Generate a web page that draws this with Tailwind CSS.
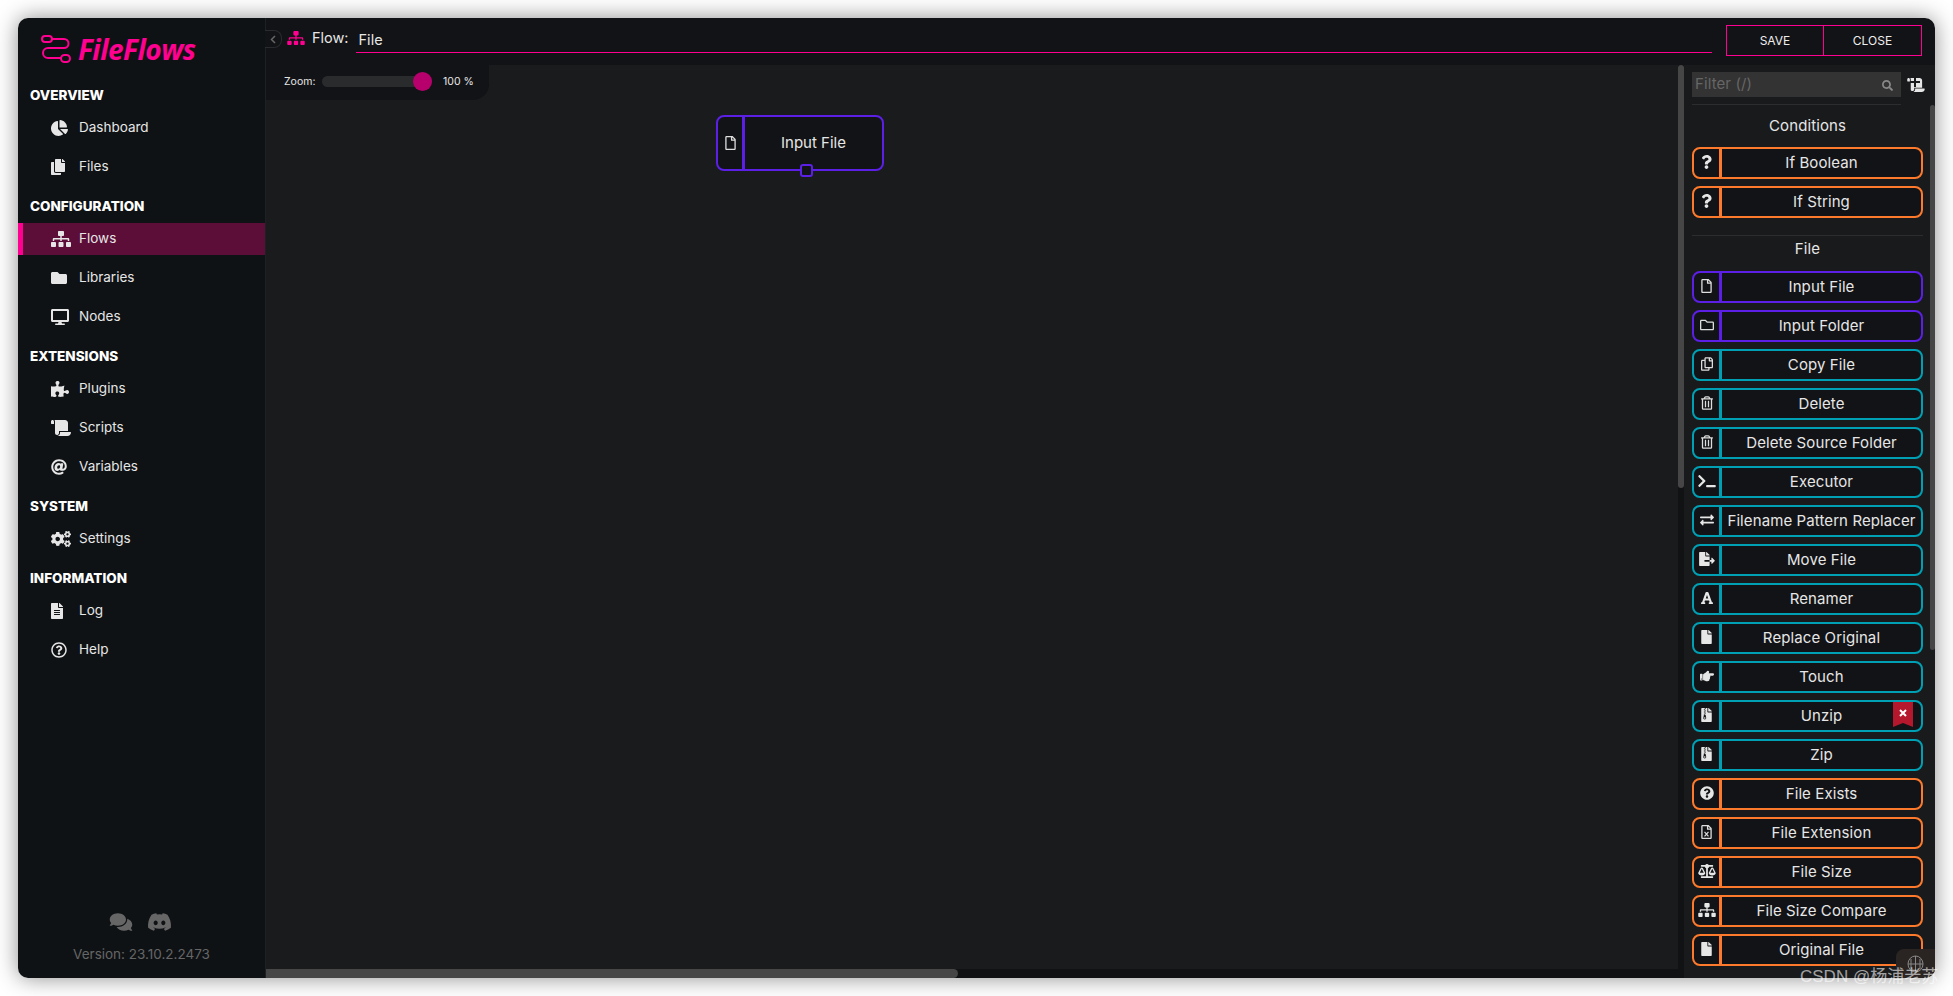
<!DOCTYPE html>
<html lang="en">
<head>
  <meta charset="UTF-8" />
  <title>FileFlows</title>
  <script src="https://cdn.jsdelivr.net/npm/@tailwindcss/browser@4"></script>
</head>
<body class="relative h-[996px] overflow-hidden bg-white pl-[18px] pt-[18px] font-[Inter,sans-serif] text-[#e6e6e6]">
  <!-- icon sprites -->
  <svg class="hidden">
    <symbol id="i-sitemap" viewBox="0 0 640 512"><path fill="currentColor" d="M128 352H32c-17.67 0-32 14.33-32 32v96c0 17.67 14.33 32 32 32h96c17.67 0 32-14.33 32-32v-96c0-17.67-14.33-32-32-32zm-24-80h192v48h48v-48h192v48h48v-57.59c0-21.17-17.23-38.41-38.41-38.41H344v-64h40c17.67 0 32-14.33 32-32V32c0-17.67-14.33-32-32-32H256c-17.67 0-32 14.33-32 32v96c0 17.67 14.33 32 32 32h40v64H94.41C73.23 224 56 241.23 56 262.41V320h48v-48zm264 80h-96c-17.67 0-32 14.33-32 32v96c0 17.67 14.33 32 32 32h96c17.67 0 32-14.33 32-32v-96c0-17.67-14.33-32-32-32zm240 0h-96c-17.67 0-32 14.33-32 32v96c0 17.67 14.33 32 32 32h96c17.67 0 32-14.33 32-32v-96c0-17.67-14.33-32-32-32z"/></symbol>
    <symbol id="i-file" viewBox="0 0 384 512"><path fill="currentColor" d="M224 136V0H24C10.7 0 0 10.7 0 24v464c0 13.3 10.7 24 24 24h336c13.3 0 24-10.7 24-24V160H248c-13.2 0-24-10.8-24-24zm160-14.1v6.1H256V0h6.1c6.4 0 12.5 2.5 17 7l97.9 98c4.5 4.5 7 10.6 7 16.9z"/></symbol>
    <symbol id="i-file-o" viewBox="0 0 384 512"><path fill="currentColor" d="M369.9 97.9L286 14C277 5 264.8-.1 252.1-.1H48C21.5 0 0 21.5 0 48v416c0 26.5 21.5 48 48 48h288c26.5 0 48-21.5 48-48V131.9c0-12.7-5.1-25-14.1-34zM332.1 128H256V51.9l76.1 76.1zM48 464V48h160v104c0 13.3 10.7 24 24 24h104v288H48z"/></symbol>
    <symbol id="i-file-x" viewBox="0 0 384 512"><path fill="currentColor" d="M369.9 97.9L286 14C277 5 264.8-.1 252.1-.1H48C21.5 0 0 21.5 0 48v416c0 26.5 21.5 48 48 48h288c26.5 0 48-21.5 48-48V131.9c0-12.7-5.1-25-14.1-34zM332.1 128H256V51.9l76.1 76.1zM48 464V48h160v104c0 13.3 10.7 24 24 24h104v288H48z"/><path fill="none" stroke="currentColor" stroke-width="44" d="M120 250l144 170M264 250L120 420"/></symbol>
    <symbol id="i-folder" viewBox="0 0 512 512"><path fill="currentColor" d="M464 128H272l-64-64H48C21.49 64 0 85.49 0 112v288c0 26.51 21.49 48 48 48h416c26.51 0 48-21.49 48-48V176c0-26.51-21.49-48-48-48z"/></symbol>
    <symbol id="i-folder-o" viewBox="0 0 512 512"><path fill="currentColor" d="M464 128H272l-54.63-54.63c-6-6-14.14-9.37-22.63-9.37H48C21.49 64 0 85.49 0 112v288c0 26.51 21.49 48 48 48h416c26.51 0 48-21.49 48-48V176c0-26.51-21.49-48-48-48zm0 272H48V112h140.12l54.63 54.63c6 6 14.14 9.37 22.63 9.37H464v224z"/></symbol>
    <symbol id="i-copy-o" viewBox="0 0 448 512"><path fill="currentColor" d="M433.941 65.941l-51.882-51.882A48 48 0 0 0 348.118 0H176c-26.51 0-48 21.49-48 48v48H48c-26.51 0-48 21.49-48 48v320c0 26.51 21.49 48 48 48h224c26.51 0 48-21.49 48-48v-48h80c26.51 0 48-21.49 48-48V99.882a48 48 0 0 0-14.059-33.941zM266 464H54a6 6 0 0 1-6-6V150a6 6 0 0 1 6-6h74v224c0 26.51 21.49 48 48 48h96v42a6 6 0 0 1-6 6zm128-96H182a6 6 0 0 1-6-6V54a6 6 0 0 1 6-6h106v88c0 13.255 10.745 24 24 24h88v202a6 6 0 0 1-6 6zm6-256h-64V48h9.632c1.591 0 3.117.632 4.243 1.757l48.368 48.368a6 6 0 0 1 1.757 4.243V112z"/></symbol>
    <symbol id="i-copy" viewBox="0 0 448 512"><path fill="currentColor" d="M320 448v40c0 13.255-10.745 24-24 24H24c-13.255 0-24-10.745-24-24V120c0-13.255 10.745-24 24-24h72v296c0 30.879 25.121 56 56 56h168zm0-344V0H152c-13.255 0-24 10.745-24 24v368c0 13.255 10.745 24 24 24h272c13.255 0 24-10.745 24-24V128H344c-13.2 0-24-10.8-24-24zm120.971-31.029L375.029 7.029A24 24 0 0 0 358.059 0H352v96h96v-6.059a24 24 0 0 0-7.029-16.97z"/></symbol>
    <symbol id="i-trash" viewBox="0 0 448 512"><path fill="currentColor" d="M268 416h24a12 12 0 0 0 12-12V188a12 12 0 0 0-12-12h-24a12 12 0 0 0-12 12v216a12 12 0 0 0 12 12zM432 80h-82.41l-34-56.7A48 48 0 0 0 274.41 0H173.59a48 48 0 0 0-41.16 23.3L98.41 80H16A16 16 0 0 0 0 96v16a16 16 0 0 0 16 16h16v336a48 48 0 0 0 48 48h288a48 48 0 0 0 48-48V128h16a16 16 0 0 0 16-16V96a16 16 0 0 0-16-16zM171.84 50.91A6 6 0 0 1 177 48h94a6 6 0 0 1 5.15 2.91L293.61 80H154.39zM368 464H80V128h288zm-212-48h24a12 12 0 0 0 12-12V188a12 12 0 0 0-12-12h-24a12 12 0 0 0-12 12v216a12 12 0 0 0 12 12z"/></symbol>
    <symbol id="i-terminal" viewBox="0 0 640 512"><path fill="currentColor" d="M257.981 272.971L63.638 467.314c-9.373 9.373-24.569 9.373-33.941 0L7.029 444.647c-9.357-9.357-9.375-24.522-.04-33.901L161.011 256 6.99 101.255c-9.335-9.379-9.317-24.544.04-33.901l22.667-22.667c9.373-9.373 24.569-9.373 33.941 0L257.981 239.03c9.373 9.372 9.373 24.568 0 33.941zM640 456v-32c0-13.255-10.745-24-24-24H312c-13.255 0-24 10.745-24 24v32c0 13.255 10.745 24 24 24h304c13.255 0 24-10.745 24-24z"/></symbol>
    <symbol id="i-exchange" viewBox="0 0 512 512"><path fill="currentColor" d="M0 168v-16c0-13.255 10.745-24 24-24h360V80c0-21.367 25.899-32.042 40.971-16.971l80 80c9.372 9.373 9.372 24.569 0 33.941l-80 80C409.956 271.982 384 261.456 384 240v-48H24c-13.255 0-24-10.745-24-24zm488 152H128v-48c0-21.314-25.862-32.08-40.971-16.971l-80 80c-9.372 9.373-9.372 24.569 0 33.941l80 80C102.057 463.997 128 453.437 128 432v-48h360c13.255 0 24-10.745 24-24v-16c0-13.255-10.745-24-24-24z"/></symbol>
    <symbol id="i-file-export" viewBox="0 0 576 512"><path fill="currentColor" d="M384 121.9c0-6.3-2.5-12.4-7-16.9L279.1 7c-4.5-4.5-10.6-7-17-7H256v128h128zM571 308l-95.7-96.4c-10.1-10.1-27.4-3-27.4 11.3V288h-64v64h64v65.2c0 14.3 17.3 21.4 27.4 11.3L571 332c6.6-6.6 6.6-17.4 0-24zm-379 28v-32c0-8.8 7.2-16 16-16h176V160H248c-13.2 0-24-10.8-24-24V0H24C10.7 0 0 10.7 0 24v464c0 13.3 10.7 24 24 24h336c13.3 0 24-10.7 24-24V352H208c-8.8 0-16-7.2-16-16z"/></symbol>
    <symbol id="i-font" viewBox="0 0 448 512"><path fill="currentColor" d="M432 416h-23.41L277.88 53.69A32 32 0 0 0 247.58 32h-47.16a32 32 0 0 0-30.3 21.69L39.41 416H16a16 16 0 0 0-16 16v32a16 16 0 0 0 16 16h128a16 16 0 0 0 16-16v-32a16 16 0 0 0-16-16h-19.58l23.3-64h152.56l23.3 64H304a16 16 0 0 0-16 16v32a16 16 0 0 0 16 16h128a16 16 0 0 0 16-16v-32a16 16 0 0 0-16-16zM176.85 272L224 142.51 271.15 272z"/></symbol>
    <symbol id="i-hand" viewBox="0 0 512 512"><path fill="currentColor" d="M512 199.652c0 23.625-20.65 43.826-44.8 43.826h-99.851c16.34 17.048 18.346 49.766-6.299 70.944 14.288 22.829 2.147 53.017-16.45 62.315C353.574 425.878 322.654 448 272 448c-2.746 0-13.276-.203-16-.195-61.971.168-76.894-31.065-123.731-38.315C120.596 407.683 112 397.599 112 385.786V214.261l.002-.001c.011-18.366 10.607-35.889 28.464-43.845 28.886-12.994 95.413-49.038 107.534-77.323 7.797-18.194 21.384-29.084 40-29.092 34.222-.014 57.752 35.098 44.119 66.908-3.583 8.359-8.312 16.67-14.128 24.918H467.2c23.45 0 44.8 20.543 44.8 43.826zM96 200v192c0 13.255-10.745 24-24 24H24c-13.255 0-24-10.745-24-24V200c0-13.255 10.745-24 24-24h48c13.255 0 24 10.745 24 24zM68 368c0-11.046-8.954-20-20-20s-20 8.954-20 20 8.954 20 20 20 20-8.954 20-20z"/></symbol>
    <symbol id="i-zip" viewBox="0 0 384 512"><path fill="currentColor" d="M377 105L279.1 7c-4.5-4.5-10.6-7-17-7H256v128h128v-6.1c0-6.3-2.5-12.4-7-16.9zM128.4 336c-17.9 0-32.4 12.1-32.4 27 0 15 14.6 27 32.5 27s32.4-12.1 32.4-27-14.6-27-32.5-27zM224 136V0h-63.6v32h-32V0H24C10.7 0 0 10.7 0 24v464c0 13.3 10.7 24 24 24h336c13.3 0 24-10.7 24-24V160H248c-13.2 0-24-10.8-24-24zM95.9 32h32v32h-32zm32.3 384c-33.2 0-58-30.4-51.4-62.9L96.4 256v-32h32v-32h-32v-32h32v-32h-32V96h32V64h32v32h-32v32h32v32h-32v32h32v32h-32v32h22.1c5.7 0 10.7 4.1 11.8 9.7l17.3 87.7c6.4 32.4-18.4 62.6-51.4 62.6z"/></symbol>
    <symbol id="i-q-circle" viewBox="0 0 512 512"><path fill="currentColor" d="M504 256c0 136.997-111.043 248-248 248S8 392.997 8 256C8 119.083 119.043 8 256 8s248 111.083 248 248zM262.655 90c-54.497 0-89.255 22.957-116.549 63.758-3.536 5.286-2.353 12.415 2.715 16.258l34.699 26.31c5.205 3.947 12.621 3.008 16.665-2.122 17.864-22.658 30.113-35.797 57.303-35.797 20.429 0 45.698 13.148 45.698 32.958 0 14.976-12.363 22.667-32.534 33.976C247.128 238.528 216 254.941 216 296v4c0 6.627 5.373 12 12 12h56c6.627 0 12-5.373 12-12v-1.333c0-28.462 83.186-29.647 83.186-106.667 0-58.002-60.165-102-116.531-102zM256 338c-25.365 0-46 20.635-46 46 0 25.364 20.635 46 46 46s46-20.636 46-46c0-25.365-20.635-46-46-46z"/></symbol>
    <symbol id="i-q-circle-o" viewBox="0 0 512 512"><path fill="currentColor" d="M256 8C119.043 8 8 119.083 8 256c0 136.997 111.043 248 248 248s248-111.003 248-248C504 119.083 392.957 8 256 8zm0 448c-110.532 0-200-89.431-200-200 0-110.495 89.472-200 200-200 110.491 0 200 89.471 200 200 0 110.53-89.431 200-200 200zm107.244-255.2c0 67.052-72.421 68.084-72.421 92.863V300c0 6.627-5.373 12-12 12h-45.647c-6.627 0-12-5.373-12-12v-8.659c0-35.745 27.1-50.034 47.579-61.516 17.561-9.845 28.324-16.541 28.324-29.579 0-17.246-21.999-28.693-39.784-28.693-23.189 0-33.894 10.977-48.942 29.969-4.057 5.12-11.46 6.071-16.666 2.124l-27.824-21.098c-5.107-3.872-6.251-11.066-2.644-16.363C184.846 131.491 214.94 112 261.794 112c49.071 0 101.45 38.304 101.45 88.8zM298 368c0 23.159-18.841 42-42 42s-42-18.841-42-42 18.841-42 42-42 42 18.841 42 42z"/></symbol>
    <symbol id="i-question" viewBox="0 0 384 512"><path fill="currentColor" d="M202.021 0C122.202 0 70.503 32.703 29.914 91.026c-7.363 10.58-5.093 25.086 5.178 32.874l43.138 32.709c10.373 7.865 25.132 6.026 33.253-4.148 25.049-31.381 43.63-49.449 82.757-49.449 30.764 0 68.816 19.799 68.816 49.631 0 22.552-18.617 34.134-48.993 51.164-35.423 19.86-82.299 44.576-82.299 106.405V320c0 13.255 10.745 24 24 24h72.471c13.255 0 24-10.745 24-24v-5.773c0-42.86 125.268-44.645 125.268-160.627C377.504 66.256 286.902 0 202.021 0zM192 373.459c-38.196 0-69.271 31.075-69.271 69.271 0 38.195 31.075 69.27 69.271 69.27s69.271-31.075 69.271-69.271-31.075-69.27-69.271-69.27z"/></symbol>
    <symbol id="i-pie" viewBox="0 0 544 512"><path fill="currentColor" d="M527.79 288H290.5l158.03 158.03c6.04 6.04 15.98 6.53 22.19.68 38.7-36.46 65.32-85.61 73.13-140.86 1.34-9.46-6.51-17.85-16.06-17.85zm-15.83-64.8C503.72 103.74 408.26 8.28 288.8.04 279.68-.59 272 7.1 272 16.24V240h223.77c9.14 0 16.82-7.68 16.19-16.8zM224 288V50.71c0-9.55-8.39-17.4-17.84-16.06C86.99 51.49-4.1 155.6.14 280.37 4.5 408.51 114.83 513.59 243.03 511.98c50.4-.63 96.97-16.87 135.26-44.03 7.9-5.6 8.42-17.23 1.57-24.08L224 288z"/></symbol>
    <symbol id="i-desktop" viewBox="0 0 576 512"><path fill="currentColor" d="M528 0H48C21.5 0 0 21.5 0 48v320c0 26.5 21.5 48 48 48h192l-16 48h-72c-13.3 0-24 10.7-24 24s10.7 24 24 24h272c13.3 0 24-10.7 24-24s-10.7-24-24-24h-72l-16-48h192c26.5 0 48-21.5 48-48V48c0-26.5-21.5-48-48-48zm-16 352H64V64h448v288z"/></symbol>
    <symbol id="i-puzzle" viewBox="0 0 576 512"><path fill="currentColor" d="M519.442 288.651c-41.519 0-59.5 31.593-82.058 31.593C377.409 320.244 432 144 432 144s-196.288 80-196.288-3.297c0-35.827 36.288-46.25 36.288-85.985C272 19.216 243.885 0 210.539 0c-34.654 0-66.366 18.891-66.366 56.346 0 41.364 31.711 59.277 31.711 81.75C175.885 207.719 0 166.758 0 166.758v333.237s178.635 41.047 178.635-28.662c0-22.473-40-40.107-40-81.471 0-37.456 29.25-56.346 63.577-56.346 33.673 0 61.788 19.216 61.788 54.717 0 39.735-36.288 50.158-36.288 85.985 0 60.803 129.675 25.73 181.23 25.73 0 0-34.725-120.101 25.827-120.101 35.962 0 46.222 36.152 86.13 36.152C556.025 416.1 576 388.2 576 354.7c0-33.4-19.5-66-56.558-66z"/></symbol>
    <symbol id="i-scroll" viewBox="0 0 640 512"><path fill="currentColor" d="M48 0C21.53 0 0 21.53 0 48v64c0 8.84 7.16 16 16 16h80V48C96 21.53 74.47 0 48 0zm208 412.57V352h288V96c0-52.94-43.06-96-96-96H111.59C121.74 13.41 128 29.92 128 48v368c0 38.87 34.65 69.65 74.75 63.12C234.22 474 256 444.46 256 412.57zM288 384v32c0 52.93-43.06 96-96 96h336c61.86 0 112-50.14 112-112 0-8.84-7.16-16-16-16H288z"/></symbol>
    <symbol id="i-at" viewBox="0 0 512 512"><path fill="currentColor" d="M256 8C118.941 8 8 118.919 8 256c0 137.059 110.919 248 248 248 48.154 0 95.342-14.14 135.408-40.223 12.005-7.815 14.625-24.288 5.552-35.372l-10.177-12.433c-7.671-9.371-21.179-11.667-31.373-5.129C325.92 429.757 291.314 440 256 440c-101.458 0-184-82.542-184-184S154.542 72 256 72c100.139 0 184 57.619 184 160 0 38.786-21.093 79.742-58.17 83.693-17.349-.454-16.91-12.857-13.476-30.024l23.433-121.11C394.653 149.75 383.308 136 368.225 136h-44.981a13.518 13.518 0 0 0-13.432 11.993l-.01.092c-14.697-17.901-40.448-21.775-59.971-21.775-74.58 0-137.831 62.234-137.831 151.46 0 65.303 36.785 105.87 96 105.87 26.984 0 57.369-15.637 74.991-38.333 9.522 34.104 40.613 34.103 70.71 34.103C462.609 379.41 504 307.798 504 232 504 95.653 394.023 8 256 8zm-21.68 304.43c-22.249 0-36.07-15.623-36.07-40.771 0-44.993 30.779-72.729 58.63-72.729 22.292 0 35.601 15.241 35.601 40.77 0 45.061-33.875 72.73-58.161 72.73z"/></symbol>
    <symbol id="i-cogs" viewBox="0 0 640 512"><path fill="currentColor" d="M512.1 191l-8.2 14.3c-3 5.3-9.4 7.5-15.1 5.4-11.8-4.4-22.6-10.7-32.1-18.6-4.6-3.8-5.8-10.5-2.8-15.7l8.2-14.3c-6.9-8-12.3-17.3-15.9-27.4h-16.5c-6 0-11.2-4.3-12.2-10.3-2-12-2.1-24.6 0-37.1 1-6 6.2-10.4 12.2-10.4h16.5c3.6-10.1 9-19.4 15.9-27.4l-8.2-14.3c-3-5.2-1.9-11.9 2.8-15.7 9.5-7.9 20.4-14.2 32.1-18.6 5.7-2.1 12.1.1 15.1 5.4l8.2 14.3c10.5-1.9 21.2-1.9 31.7 0L552 6.3c3-5.3 9.4-7.5 15.1-5.4 11.8 4.4 22.6 10.7 32.1 18.6 4.6 3.8 5.8 10.5 2.8 15.7l-8.2 14.3c6.9 8 12.3 17.3 15.9 27.4h16.5c6 0 11.2 4.3 12.2 10.3 2 12 2.1 24.6 0 37.1-1 6-6.2 10.4-12.2 10.4h-16.5c-3.6 10.1-9 19.4-15.9 27.4l8.2 14.3c3 5.2 1.9 11.9-2.8 15.7-9.5 7.9-20.4 14.2-32.1 18.6-5.7 2.1-12.1-.1-15.1-5.4l-8.2-14.3c-10.4 1.9-21.2 1.9-31.7 0zm-10.5-58.8c38.5 29.6 82.4-14.3 52.8-52.8-38.5-29.7-82.4 14.3-52.8 52.8zM386.3 286.1l33.7 16.8c10.1 5.8 14.5 18.1 10.5 29.1-8.9 24.2-26.4 46.4-42.6 65.8-7.4 8.9-20.2 11.1-30.3 5.3l-29.1-16.8c-16 13.7-34.6 24.6-54.9 31.7v33.6c0 11.6-8.3 21.6-19.7 23.6-24.6 4.2-50.4 4.4-75.9 0-11.5-2-20-11.9-20-23.6V418c-20.3-7.2-38.9-18-54.9-31.7L74 403c-10 5.8-22.9 3.6-30.3-5.3-16.2-19.4-33.3-41.6-42.2-65.7-4-10.9.4-23.2 10.5-29.1l33.3-16.8c-3.9-20.9-3.9-42.4 0-63.4L12 205.8c-10.1-5.8-14.6-18.1-10.5-29 8.9-24.2 26-46.4 42.2-65.8 7.4-8.9 20.2-11.1 30.3-5.3l29.1 16.8c16-13.7 34.6-24.6 54.9-31.7V57.1c0-11.5 8.2-21.5 19.6-23.5 24.6-4.2 50.5-4.4 76-.1 11.5 2 20 11.9 20 23.6v33.6c20.3 7.2 38.9 18 54.9 31.7l29.1-16.8c10-5.8 22.9-3.6 30.3 5.3 16.2 19.4 33.2 41.6 42.1 65.8 4 10.9.1 23.2-10 29.1l-33.7 16.8c3.9 21 3.9 42.5 0 63.5zm-117.6 21.1c59.2-77-28.7-164.9-105.7-105.7-59.2 77 28.7 164.9 105.7 105.7zm243.4 182.7l-8.2 14.3c-3 5.3-9.4 7.5-15.1 5.4-11.8-4.4-22.6-10.7-32.1-18.6-4.6-3.8-5.8-10.5-2.8-15.7l8.2-14.3c-6.9-8-12.3-17.3-15.9-27.4h-16.5c-6 0-11.2-4.3-12.2-10.3-2-12-2.1-24.6 0-37.1 1-6 6.2-10.4 12.2-10.4h16.5c3.6-10.1 9-19.4 15.9-27.4l-8.2-14.3c-3-5.2-1.9-11.9 2.8-15.7 9.5-7.9 20.4-14.2 32.1-18.6 5.7-2.1 12.1.1 15.1 5.4l8.2 14.3c10.5-1.9 21.2-1.9 31.7 0l8.2-14.3c3-5.3 9.4-7.5 15.1-5.4 11.8 4.4 22.6 10.7 32.1 18.6 4.6 3.8 5.8 10.5 2.8 15.7l-8.2 14.3c6.9 8 12.3 17.3 15.9 27.4h16.5c6 0 11.2 4.3 12.2 10.3 2 12 2.1 24.6 0 37.1-1 6-6.2 10.4-12.2 10.4h-16.5c-3.6 10.1-9 19.4-15.9 27.4l8.2 14.3c3 5.2 1.9 11.9-2.8 15.7-9.5 7.9-20.4 14.2-32.1 18.6-5.7 2.1-12.1-.1-15.1-5.4l-8.2-14.3c-10.4 1.9-21.2 1.9-31.7 0zM501.6 431c38.5 29.6 82.4-14.3 52.8-52.8-38.5-29.6-82.4 14.3-52.8 52.8z"/></symbol>
    <symbol id="i-file-alt" viewBox="0 0 384 512"><path fill="currentColor" d="M224 136V0H24C10.7 0 0 10.7 0 24v464c0 13.3 10.7 24 24 24h336c13.3 0 24-10.7 24-24V160H248c-13.2 0-24-10.8-24-24zm64 236c0 6.6-5.4 12-12 12H108c-6.6 0-12-5.4-12-12v-8c0-6.6 5.4-12 12-12h168c6.6 0 12 5.4 12 12v8zm0-64c0 6.6-5.4 12-12 12H108c-6.6 0-12-5.4-12-12v-8c0-6.6 5.4-12 12-12h168c6.6 0 12 5.4 12 12v8zm0-72v8c0 6.6-5.4 12-12 12H108c-6.6 0-12-5.4-12-12v-8c0-6.6 5.4-12 12-12h168c6.6 0 12 5.4 12 12zm96-114.1v6.1H256V0h6.1c6.4 0 12.5 2.5 17 7l97.9 98c4.5 4.5 7 10.6 7 16.9z"/></symbol>
    <symbol id="i-comments" viewBox="0 0 576 512"><path fill="currentColor" d="M416 192c0-88.4-93.1-160-208-160S0 103.6 0 192c0 34.3 14.1 65.9 38 92-13.4 30.2-35.5 54.2-35.8 54.5-2.2 2.3-2.8 5.7-1.5 8.7S4.8 352 8 352c36.6 0 66.9-12.3 88.7-25 32.2 15.7 70.3 25 111.3 25 114.9 0 208-71.6 208-160zm122 220c23.9-26 38-57.7 38-92 0-66.9-53.5-124.2-129.3-148.1.9 6.6 1.3 13.3 1.3 20.1 0 105.9-107.7 192-240 192-10.8 0-21.3-.8-31.7-1.9C207.8 439.6 281.8 480 368 480c41 0 79.1-9.2 111.3-25 21.8 12.7 52.1 25 88.7 25 3.2 0 6.1-1.9 7.3-4.8 1.3-2.9.7-6.3-1.5-8.7-.3-.3-22.4-24.2-35.8-54.5z"/></symbol>
    <symbol id="i-discord" viewBox="0 0 640 512"><path fill="currentColor" d="M524.531,69.836a1.5,1.5,0,0,0-.764-.7A485.065,485.065,0,0,0,404.081,32.03a1.816,1.816,0,0,0-1.923.91,337.461,337.461,0,0,0-14.9,30.6,447.848,447.848,0,0,0-134.426,0,309.541,309.541,0,0,0-15.135-30.6,1.89,1.89,0,0,0-1.924-.91A483.689,483.689,0,0,0,116.085,69.137a1.712,1.712,0,0,0-.788.676C39.068,183.651,18.186,294.69,28.43,404.354a2.016,2.016,0,0,0,.765,1.375A487.666,487.666,0,0,0,176.02,479.918a1.9,1.9,0,0,0,2.063-.676A348.2,348.2,0,0,0,208.12,430.4a1.86,1.86,0,0,0-1.019-2.588,321.173,321.173,0,0,1-45.868-21.853,1.885,1.885,0,0,1-.185-3.126c3.082-2.309,6.166-4.711,9.109-7.137a1.819,1.819,0,0,1,1.9-.256c96.229,43.917,200.41,43.917,295.5,0a1.812,1.812,0,0,1,1.924.233c2.944,2.426,6.027,4.851,9.132,7.16a1.884,1.884,0,0,1-.162,3.126,301.407,301.407,0,0,1-45.89,21.83,1.875,1.875,0,0,0-1,2.611,391.055,391.055,0,0,0,30.014,48.815,1.864,1.864,0,0,0,2.063.7A486.048,486.048,0,0,0,610.7,405.729a1.882,1.882,0,0,0,.765-1.352C623.729,277.594,590.933,167.465,524.531,69.836ZM222.491,337.58c-28.972,0-52.844-26.587-52.844-59.239S193.056,219.1,222.491,219.1c29.665,0,53.306,26.82,52.843,59.239C275.334,310.993,251.924,337.58,222.491,337.58Zm195.38,0c-28.971,0-52.843-26.587-52.843-59.239S388.437,219.1,417.871,219.1c29.667,0,53.307,26.820,52.844,59.239C470.715,310.993,447.538,337.58,417.871,337.58Z"/></symbol>
    <symbol id="i-scale" viewBox="0 0 640 512"><path fill="currentColor" d="M256 336h-.02c0-16.18 1.34-8.73-85.05-181.51-17.65-35.29-68.19-35.36-85.87 0C-2.06 328.75.02 320.33.02 336H0c0 44.18 57.31 80 128 80s128-35.82 128-80zM128 176l72 144H56l72-144zm511.98 160c0-16.18 1.34-8.73-85.05-181.51-17.65-35.29-68.19-35.36-85.87 0-87.12 174.26-85.04 165.84-85.04 181.51H384c0 44.18 57.31 80 128 80s128-35.82 128-80h-.02zM440 320l72-144 72 144H440zm88 128H352V153.25c23.51-10.29 41.16-31.48 46.39-57.25H528c8.84 0 16-7.16 16-16V48c0-8.84-7.16-16-16-16H383.64C369.04 12.68 346.09 0 320 0s-49.04 12.68-63.64 32H112c-8.84 0-16 7.16-16 16v32c0 8.84 7.16 16 16 16h129.61c5.23 25.76 22.87 46.96 46.39 57.25V448H112c-8.84 0-16 7.16-16 16v32c0 8.84 7.16 16 16 16h416c8.84 0 16-7.16 16-16v-32c0-8.84-7.16-16-16-16z"/></symbol>
    <symbol id="i-search" viewBox="0 0 512 512"><path fill="currentColor" d="M505 442.7L405.3 343c-4.5-4.5-10.6-7-17-7H372c27.6-35.3 44-79.7 44-128C416 93.1 322.9 0 208 0S0 93.1 0 208s93.1 208 208 208c48.3 0 92.7-16.4 128-44v16.3c0 6.4 2.5 12.5 7 17l99.7 99.7c9.4 9.4 24.6 9.4 33.9 0l28.3-28.3c9.4-9.4 9.4-24.6.1-34zM208 336c-70.7 0-128-57.2-128-128 0-70.7 57.2-128 128-128 70.7 0 128 57.2 128 128 0 70.7-57.2 128-128 128z"/></symbol>
  </svg>

  <div class="flex h-[960px] w-[1917px] overflow-hidden rounded-[10px] shadow-[0_0_22px_rgba(0,0,0,0.45)]">
    <!-- sidebar -->
    <aside class="flex h-full w-[247px] shrink-0 flex-col bg-[#0f1215] text-[13.5px]">
      <div class="flex h-[57px] items-center pl-[23px] pt-[5px]">
        <svg class="mr-[7px] h-[28px] w-[30px] text-[#ff0090]" viewBox="0 0 30 28" fill="none" stroke="currentColor" stroke-width="2">
          <rect x="1" y="1" width="10" height="6" rx="3" />
          <path d="M11 4h12a4.500 4.500 0 0 1 0 9H7a5 5 0 0 0 0 10h13" />
          <rect x="20" y="20" width="9" height="7" rx="3.500" />
        </svg>
        <span class="font-['Open_Sans',sans-serif] text-[28px] font-bold italic leading-none tracking-[-0.5px] text-[#ff0090]">FileFlows</span>
      </div>

      <h3 class="mb-[1px] mt-[8px] flex h-6 items-center pl-3 text-[13.5px] font-extrabold text-white">OVERVIEW</h3>
      <a class="my-[3.5px] flex h-8 items-center pl-[33px]"><span class="w-[28px]"><svg class="block h-4 w-[17px]"><use href="#i-pie" /></svg></span>Dashboard</a>
      <a class="my-[3.5px] flex h-8 items-center pl-[33px]"><span class="w-[28px]"><svg class="block h-4 w-[14px]"><use href="#i-copy" /></svg></span>Files</a>

      <h3 class="mb-[1px] mt-[8px] flex h-6 items-center pl-3 text-[13.5px] font-extrabold text-white">CONFIGURATION</h3>
      <a class="my-[3.5px] flex h-8 items-center border-l-[5px] border-[#ff0090] bg-[#5c0d38] pl-[28px]"><span class="w-[28px]"><svg class="block h-4 w-5"><use href="#i-sitemap" /></svg></span>Flows</a>
      <a class="my-[3.5px] flex h-8 items-center pl-[33px]"><span class="w-[28px]"><svg class="block h-4 w-4"><use href="#i-folder" /></svg></span>Libraries</a>
      <a class="my-[3.5px] flex h-8 items-center pl-[33px]"><span class="w-[28px]"><svg class="block h-4 w-[18px]"><use href="#i-desktop" /></svg></span>Nodes</a>

      <h3 class="mb-[1px] mt-[8px] flex h-6 items-center pl-3 text-[13.5px] font-extrabold text-white">EXTENSIONS</h3>
      <a class="my-[3.5px] flex h-8 items-center pl-[33px]"><span class="w-[28px]"><svg class="block h-4 w-[18px]"><use href="#i-puzzle" /></svg></span>Plugins</a>
      <a class="my-[3.5px] flex h-8 items-center pl-[33px]"><span class="w-[28px]"><svg class="block h-4 w-5"><use href="#i-scroll" /></svg></span>Scripts</a>
      <a class="my-[3.5px] flex h-8 items-center pl-[33px]"><span class="w-[28px]"><svg class="block h-4 w-4"><use href="#i-at" /></svg></span>Variables</a>

      <h3 class="mb-[1px] mt-[8px] flex h-6 items-center pl-3 text-[13.5px] font-extrabold text-white">SYSTEM</h3>
      <a class="my-[3.5px] flex h-8 items-center pl-[33px]"><span class="w-[28px]"><svg class="block h-4 w-5"><use href="#i-cogs" /></svg></span>Settings</a>

      <h3 class="mb-[1px] mt-[8px] flex h-6 items-center pl-3 text-[13.5px] font-extrabold text-white">INFORMATION</h3>
      <a class="my-[3.5px] flex h-8 items-center pl-[33px]"><span class="w-[28px]"><svg class="block h-4 w-3"><use href="#i-file-alt" /></svg></span>Log</a>
      <a class="my-[3.5px] flex h-8 items-center pl-[33px]"><span class="w-[28px]"><svg class="block h-4 w-4"><use href="#i-q-circle-o" /></svg></span>Help</a>

      <div class="mt-auto flex flex-col items-center pb-[14px] text-[#666]">
        <div class="flex items-center gap-[14px] pr-[2px]">
          <svg class="h-[20px] w-[24px]"><use href="#i-comments" /></svg>
          <svg class="h-[20px] w-[25px]"><use href="#i-discord" /></svg>
        </div>
        <span class="mt-[12px] text-[13.5px] leading-[20px]">Version: 23.10.2.2473</span>
      </div>
    </aside>

    <!-- main -->
    <main class="relative flex h-full flex-1 flex-col border-l border-[#1e2023]">
      <div class="absolute -left-px top-[12px] flex h-[18px] w-[17px] items-center justify-center rounded-r-lg border border-l-0 border-[#2a2b2e] bg-[#121316] text-[#666]">
        <svg class="h-[9px] w-[6px]" viewBox="0 0 6 9" fill="none" stroke="currentColor" stroke-width="1.500"><path d="M5 1L1.500 4.500 5 8" /></svg>
      </div>

      <header class="flex h-[47px] shrink-0 items-start bg-[#121316] pl-[21px] pr-[13px] pt-[7px]">
        <div class="flex h-[26px] items-center text-[14.5px]">
          <svg class="mr-[7px] h-[14px] w-[18px] text-[#ff0090]"><use href="#i-sitemap" /></svg>
          <span>Flow:</span>
        </div>
        <input value="File" class="ml-[7px] h-[28px] flex-1 border-b border-[#ff0090] bg-transparent px-[3px] pt-[2px] text-[14.5px] text-[#e6e6e6] outline-none" />
        <div class="ml-[14px] flex h-[31px] border-[1.5px] border-[#ff0090] text-[12px] text-[#eee]">
          <button class="w-[97px] border-r-[1.5px] border-[#ff0090]">SAVE</button>
          <button class="w-[97px]">CLOSE</button>
        </div>
      </header>

      <div class="flex min-h-0 flex-1">
        <!-- canvas -->
        <div class="flex min-w-0 flex-1 flex-col">
          <div class="relative flex-1 bg-[#1a1b1d]">
            <div class="flex h-[35px] w-[223px] items-center rounded-br-2xl bg-[#121316] pb-[2px] pl-[18px] text-[10.5px]">
              <span class="w-[38px]">Zoom:</span>
              <div class="relative h-[11px] w-[110px] rounded-full bg-[#292b2c]">
                <div class="absolute -top-1 right-0 h-[19px] w-[19px] rounded-full bg-[#b8006c]"></div>
              </div>
              <span class="ml-[11px]">100 %</span>
            </div>
            <!-- node on the canvas -->
            <div class="absolute left-[450px] top-[50px] flex h-[56px] w-[168px] rounded-lg border-[2.5px] border-[#5b1fe6] bg-[#121316]">
              <span class="flex w-[27px] items-center justify-center border-r-[3px] border-[#5b1fe6]"><svg class="h-[14px] w-[11px] text-[#ddd]"><use href="#i-file-o" /></svg></span>
              <span class="flex flex-1 items-center justify-center text-[15px]">Input File</span>
              <span class="absolute bottom-[-8px] left-[82px] h-[13px] w-[13px] rounded-[3px] border-2 border-[#5b1fe6] bg-[#121316]"></span>
            </div>
          </div>
          <div class="h-[9px] shrink-0 bg-[#111214]"><div class="h-full w-[692px] rounded-r-full bg-[#464646]"></div></div>
        </div>

        <div class="w-[6px] shrink-0 bg-[#111214]"><div class="h-[423px] rounded-full bg-[#464646]"></div></div>

        <!-- flow elements -->
        <div class="relative w-[251px] shrink-0 overflow-hidden bg-[#191a1c] pl-2 text-[15px] tracking-[0.1px]">
          <div class="absolute right-0 top-[40px] h-[545px] w-[5px] rounded-full bg-[#464646]"></div>
          <div class="mt-[7px] flex items-center">
            <div class="relative flex h-[25px] w-[209px] items-center bg-[#333] pl-[3px] text-[#666]">
              Filter (/)
              <svg class="absolute right-[8px] top-[8px] h-[11px] w-[11px] text-[#888]"><use href="#i-search" /></svg>
            </div>
            <span class="relative ml-[6px]">
              <svg class="block h-[14px] w-[18px]"><use href="#i-scroll" /></svg>
              <svg class="absolute left-[3px] top-[-1px] h-[10px] w-[10px] text-[#191a1c]" viewBox="0 0 10 10" fill="none" stroke="currentColor" stroke-width="2"><path d="M5 0v10M0 5h10" /></svg>
            </span>
          </div>
          <div class="mt-[7px] h-px w-[209px] bg-[#2c2d30]"></div>
          <div class="flex h-[42px] w-[231px] items-center justify-center">Conditions</div>

          <div class="mb-[7px] flex h-8 w-[231px] rounded-lg border-2 border-[#fd7a2c] bg-[#121316]"><span class="flex w-[28px] items-center justify-center border-r-[3px] border-[#fd7a2c] pb-[3px]"><svg class="h-[14px] w-[11px]"><use href="#i-question" /></svg></span><span class="flex-1 text-center leading-[27px]">If Boolean</span></div>
          <div class="mb-[7px] flex h-8 w-[231px] rounded-lg border-2 border-[#fd7a2c] bg-[#121316]"><span class="flex w-[28px] items-center justify-center border-r-[3px] border-[#fd7a2c] pb-[3px]"><svg class="h-[14px] w-[11px]"><use href="#i-question" /></svg></span><span class="flex-1 text-center leading-[27px]">If String</span></div>

          <div class="mt-[17px] h-px w-[231px] bg-[#2c2d30]"></div>
          <div class="mb-[9px] flex h-[26px] w-[231px] items-center justify-center">File</div>

          <div class="mb-[7px] flex h-8 w-[231px] rounded-lg border-2 border-[#5b1fe6] bg-[#121316]"><span class="flex w-[28px] items-center justify-center border-r-[3px] border-[#5b1fe6] pb-[3px]"><svg class="h-[14px] w-[11px] text-[#ddd]"><use href="#i-file-o" /></svg></span><span class="flex-1 text-center leading-[27px]">Input File</span></div>
          <div class="mb-[7px] flex h-8 w-[231px] rounded-lg border-2 border-[#5b1fe6] bg-[#121316]"><span class="flex w-[28px] items-center justify-center border-r-[3px] border-[#5b1fe6] pb-[3px]"><svg class="h-[14px] w-[14px] text-[#ddd]"><use href="#i-folder-o" /></svg></span><span class="flex-1 text-center leading-[27px]">Input Folder</span></div>

          <div class="mb-[7px] flex h-8 w-[231px] rounded-lg border-2 border-[#00a0b4] bg-[#121316]"><span class="flex w-[28px] items-center justify-center border-r-[3px] border-[#00a0b4] pb-[3px]"><svg class="h-[14px] w-[12px] text-[#ddd]"><use href="#i-copy-o" /></svg></span><span class="flex-1 text-center leading-[27px]">Copy File</span></div>
          <div class="mb-[7px] flex h-8 w-[231px] rounded-lg border-2 border-[#00a0b4] bg-[#121316]"><span class="flex w-[28px] items-center justify-center border-r-[3px] border-[#00a0b4] pb-[3px]"><svg class="h-[14px] w-[12px] text-[#ddd]"><use href="#i-trash" /></svg></span><span class="flex-1 text-center leading-[27px]">Delete</span></div>
          <div class="mb-[7px] flex h-8 w-[231px] rounded-lg border-2 border-[#00a0b4] bg-[#121316]"><span class="flex w-[28px] items-center justify-center border-r-[3px] border-[#00a0b4] pb-[3px]"><svg class="h-[14px] w-[12px] text-[#ddd]"><use href="#i-trash" /></svg></span><span class="flex-1 text-center leading-[27px]">Delete Source Folder</span></div>
          <div class="mb-[7px] flex h-8 w-[231px] rounded-lg border-2 border-[#00a0b4] bg-[#121316]"><span class="flex w-[28px] items-center justify-center border-r-[3px] border-[#00a0b4] pb-[3px]"><svg class="h-[14px] w-[18px]"><use href="#i-terminal" /></svg></span><span class="flex-1 text-center leading-[27px]">Executor</span></div>
          <div class="mb-[7px] flex h-8 w-[231px] rounded-lg border-2 border-[#00a0b4] bg-[#121316]"><span class="flex w-[28px] items-center justify-center border-r-[3px] border-[#00a0b4] pb-[3px]"><svg class="h-[14px] w-[14px]"><use href="#i-exchange" /></svg></span><span class="flex-1 text-center leading-[27px]">Filename Pattern Replacer</span></div>
          <div class="mb-[7px] flex h-8 w-[231px] rounded-lg border-2 border-[#00a0b4] bg-[#121316]"><span class="flex w-[28px] items-center justify-center border-r-[3px] border-[#00a0b4] pb-[3px]"><svg class="h-[14px] w-4"><use href="#i-file-export" /></svg></span><span class="flex-1 text-center leading-[27px]">Move File</span></div>
          <div class="mb-[7px] flex h-8 w-[231px] rounded-lg border-2 border-[#00a0b4] bg-[#121316]"><span class="flex w-[28px] items-center justify-center border-r-[3px] border-[#00a0b4] pb-[3px]"><svg class="h-[14px] w-[12px]"><use href="#i-font" /></svg></span><span class="flex-1 text-center leading-[27px]">Renamer</span></div>
          <div class="mb-[7px] flex h-8 w-[231px] rounded-lg border-2 border-[#00a0b4] bg-[#121316]"><span class="flex w-[28px] items-center justify-center border-r-[3px] border-[#00a0b4] pb-[3px]"><svg class="h-[14px] w-[11px]"><use href="#i-file" /></svg></span><span class="flex-1 text-center leading-[27px]">Replace Original</span></div>
          <div class="mb-[7px] flex h-8 w-[231px] rounded-lg border-2 border-[#00a0b4] bg-[#121316]"><span class="flex w-[28px] items-center justify-center border-r-[3px] border-[#00a0b4] pb-[3px]"><svg class="h-[14px] w-[14px]"><use href="#i-hand" /></svg></span><span class="flex-1 text-center leading-[27px]">Touch</span></div>
          <div class="relative mb-[7px] flex h-8 w-[231px] rounded-lg border-2 border-[#00a0b4] bg-[#121316]"><span class="flex w-[28px] items-center justify-center border-r-[3px] border-[#00a0b4] pb-[3px]"><svg class="h-[14px] w-[11px]"><use href="#i-zip" /></svg></span><span class="flex-1 text-center leading-[27px]">Unzip</span>
            <span class="absolute right-[8px] top-0 flex h-[25px] w-[20px] items-start justify-center bg-[#b5172c] pt-[7px] [clip-path:polygon(0_0,100%_0,100%_100%,50%_84%,0_100%)]"><svg class="h-[8px] w-[8px] text-white" viewBox="0 0 8 8" fill="none" stroke="currentColor" stroke-width="2"><path d="M1 1l6 6M7 1L1 7" /></svg></span>
          </div>
          <div class="mb-[7px] flex h-8 w-[231px] rounded-lg border-2 border-[#00a0b4] bg-[#121316]"><span class="flex w-[28px] items-center justify-center border-r-[3px] border-[#00a0b4] pb-[3px]"><svg class="h-[14px] w-[11px]"><use href="#i-zip" /></svg></span><span class="flex-1 text-center leading-[27px]">Zip</span></div>

          <div class="mb-[7px] flex h-8 w-[231px] rounded-lg border-2 border-[#fd7a2c] bg-[#121316]"><span class="flex w-[28px] items-center justify-center border-r-[3px] border-[#fd7a2c] pb-[3px]"><svg class="h-[14px] w-[14px]"><use href="#i-q-circle" /></svg></span><span class="flex-1 text-center leading-[27px]">File Exists</span></div>
          <div class="mb-[7px] flex h-8 w-[231px] rounded-lg border-2 border-[#fd7a2c] bg-[#121316]"><span class="flex w-[28px] items-center justify-center border-r-[3px] border-[#fd7a2c] pb-[3px]"><svg class="h-[14px] w-[11px] text-[#ddd]"><use href="#i-file-x" /></svg></span><span class="flex-1 text-center leading-[27px]">File Extension</span></div>
          <div class="mb-[7px] flex h-8 w-[231px] rounded-lg border-2 border-[#fd7a2c] bg-[#121316]"><span class="flex w-[28px] items-center justify-center border-r-[3px] border-[#fd7a2c] pb-[3px]"><svg class="h-[14px] w-[18px]"><use href="#i-scale" /></svg></span><span class="flex-1 text-center leading-[27px]">File Size</span></div>
          <div class="mb-[7px] flex h-8 w-[231px] rounded-lg border-2 border-[#fd7a2c] bg-[#121316]"><span class="flex w-[28px] items-center justify-center border-r-[3px] border-[#fd7a2c] pb-[3px]"><svg class="h-[14px] w-[18px]"><use href="#i-sitemap" /></svg></span><span class="flex-1 text-center leading-[27px]">File Size Compare</span></div>
          <div class="mb-[7px] flex h-8 w-[231px] rounded-lg border-2 border-[#fd7a2c] bg-[#121316]"><span class="flex w-[28px] items-center justify-center border-r-[3px] border-[#fd7a2c] pb-[3px]"><svg class="h-[14px] w-[11px]"><use href="#i-file" /></svg></span><span class="flex-1 text-center leading-[27px]">Original File</span></div>

          <!-- avatar of the watermark, sits on top of the list -->
          <div class="absolute bottom-0 right-0 flex h-[29px] w-[39px] items-start justify-center rounded-tl-lg bg-[#2a2523] pt-[6px]">
            <svg class="h-[20px] w-[17px] text-[#888]" viewBox="0 0 17 20" fill="none" stroke="currentColor" stroke-width="1"><ellipse cx="8.500" cy="9" rx="7.500" ry="8" /><path d="M8.500 1v16M4 4v10M13 4v10M1 9h15" /></svg>
          </div>
        </div>
      </div>
    </main>
  </div>

  <span class="absolute left-[1800px] top-[966px] whitespace-nowrap font-['Liberation_Sans','Noto_Sans_CJK_SC',sans-serif] text-[17px] leading-[22px] text-white/60">CSDN @杨浦老苏</span>
</body>
</html>
